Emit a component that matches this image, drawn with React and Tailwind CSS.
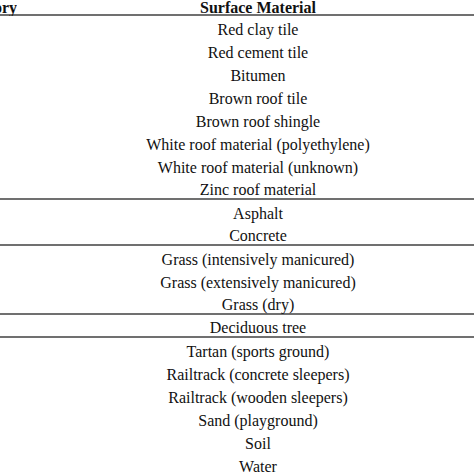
const groups = [
  [
    'Red clay tile',
    'Red cement tile',
    'Bitumen',
    'Brown roof tile',
    'Brown roof shingle',
    'White roof material (polyethylene)',
    'White roof material (unknown)',
    'Zinc roof material',
  ],
  ['Asphalt', 'Concrete'],
  ['Grass (intensively manicured)', 'Grass (extensively manicured)', 'Grass (dry)'],
  ['Deciduous tree'],
  [
    'Tartan (sports ground)',
    'Railtrack (concrete sleepers)',
    'Railtrack (wooden sleepers)',
    'Sand (playground)',
    'Soil',
    'Water',
  ],
];

export default function App() {
  return (
    <div className="w-[474px] h-[474px] overflow-hidden bg-white text-[#111] text-[16px] leading-none" style={{ fontFamily: '"Liberation Serif", "Times New Roman", serif' }}>
      <div className="w-[520px]">
        <div className="flex h-[16px] border-b-2 border-[#707070] items-start font-bold">
          <div className="w-[17px] overflow-hidden flex justify-end whitespace-nowrap">Category</div>
          <div className="w-[482px] text-center">Surface Material</div>
        </div>
        {groups.map((rows, gi) => (
          <div key={gi} className={gi < groups.length - 1 ? 'border-b-2 border-[#707070]' : ''}>
            {rows.map((r, i) => (
              <div
                key={r}
                className={`flex items-center pt-[4px] ${i === rows.length - 1 && gi < groups.length - 1 ? 'h-[21px]' : 'h-[23px]'}`}
              >
                <div className="w-[17px]" />
                <div className="w-[482px] text-center whitespace-nowrap">{r}</div>
              </div>
            ))}
          </div>
        ))}
      </div>
    </div>
  );
}
